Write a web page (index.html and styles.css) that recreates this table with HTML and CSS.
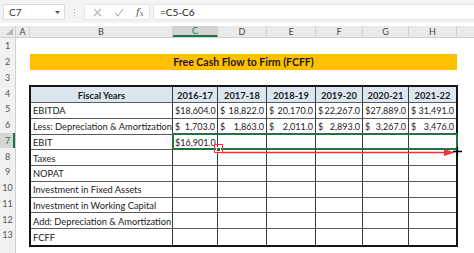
FILE: index.html
```html
<!DOCTYPE html>
<html>
<head>
<meta charset="utf-8">
<link rel="stylesheet" href="styles.css">
</head>
<body>
<div class="app">
  <div class="fbar">
    <div class="namebox"><span>C7</span><svg class="caret" width="5" height="3" viewBox="0 0 5 3"><path d="M0 0H5L2.5 3Z" fill="#555"/></svg></div>
    <div class="dots"><i></i><i></i><i></i></div>
    <div class="fbtns">
      <svg class="ico" width="9" height="9" viewBox="0 0 9 9"><path d="M1 1L8 8M8 1L1 8" stroke="#b5b5b5" stroke-width="1.1"/></svg>
      <svg class="ico" width="10" height="9" viewBox="0 0 10 9"><path d="M1 5L4 8L9 1" stroke="#b5b5b5" stroke-width="1.1" fill="none"/></svg>
      <span class="fx"><i>f</i><sub>x</sub></span>
    </div>
    <div class="formula">=C5-C6</div>
  </div>
  <div class="colhdr">
    <div class="corner"><svg width="7" height="7" viewBox="0 0 7 7"><path d="M7 0V7H0Z" fill="#b8b8b8"/></svg></div>
    <div class="ch w-a">A</div>
    <div class="ch w-b">B</div>
    <div class="ch w-c sel">C</div>
    <div class="ch w-d">D</div>
    <div class="ch w-e">E</div>
    <div class="ch w-f">F</div>
    <div class="ch w-g">G</div>
    <div class="ch w-h">H</div>
    <div class="ch w-i"></div>
  </div>
  <div class="grid">
    <div class="rowhdrs">
      <div class="rh">1</div><div class="rh">2</div><div class="rh">3</div><div class="rh">4</div>
      <div class="rh">5</div><div class="rh">6</div><div class="rh sel">7</div><div class="rh">8</div>
      <div class="rh">9</div><div class="rh">10</div><div class="rh">11</div><div class="rh">12</div>
      <div class="rh">13</div><div class="rh"></div>
    </div>
    <div class="body">
      <div class="row"></div>
      <div class="row"><div class="title">Free Cash Flow to Firm (FCFF)</div></div>
      <div class="row"></div>
      <div class="tbl">
        <div class="c hd">Fiscal Years</div><div class="c hd">2016-17</div><div class="c hd">2017-18</div><div class="c hd">2018-19</div><div class="c hd">2019-20</div><div class="c hd">2020-21</div><div class="c hd last">2021-22</div>

        <div class="c">EBITDA</div>
        <div class="c num"><span>$18,604.0</span></div>
        <div class="c num"><span>$</span><span>18,822.0</span></div>
        <div class="c num"><span>$</span><span>20,170.0</span></div>
        <div class="c num"><span>$</span><span>22,267.0</span></div>
        <div class="c num"><span>$27,889.0</span></div>
        <div class="c num last"><span>$</span><span>31,491.0</span></div>

        <div class="c">Less: Depreciation &amp; Amortization</div>
        <div class="c num"><span>$</span><span>1,703.0</span></div>
        <div class="c num"><span>$</span><span>1,863.0</span></div>
        <div class="c num"><span>$</span><span>2,011.0</span></div>
        <div class="c num"><span>$</span><span>2,893.0</span></div>
        <div class="c num"><span>$</span><span>3,267.0</span></div>
        <div class="c num last"><span>$</span><span>3,476.0</span></div>

        <div class="c">EBIT</div>
        <div class="c num"><span>$16,901.0</span></div>
        <div class="c"></div><div class="c"></div><div class="c"></div><div class="c"></div><div class="c last"></div>

        <div class="c">Taxes</div>
        <div class="c"></div><div class="c"></div><div class="c"></div><div class="c"></div><div class="c"></div><div class="c last"></div>

        <div class="c">NOPAT</div>
        <div class="c"></div><div class="c"></div><div class="c"></div><div class="c"></div><div class="c"></div><div class="c last"></div>

        <div class="c">Investment in Fixed Assets</div>
        <div class="c"></div><div class="c"></div><div class="c"></div><div class="c"></div><div class="c"></div><div class="c last"></div>

        <div class="c">Investment in Working Capital</div>
        <div class="c"></div><div class="c"></div><div class="c"></div><div class="c"></div><div class="c"></div><div class="c last"></div>

        <div class="c">Add: Depreciation &amp; Amortization</div>
        <div class="c"></div><div class="c"></div><div class="c"></div><div class="c"></div><div class="c"></div><div class="c last"></div>

        <div class="c bot">FCFF</div>
        <div class="c bot"></div><div class="c bot"></div><div class="c bot"></div><div class="c bot"></div><div class="c bot"></div><div class="c bot last"></div>
      </div>
    </div>

    <div class="selrange"></div>
    <div class="handle"></div>
    <div class="redbox"></div>
    <svg class="arrow" width="236" height="9" viewBox="0 0 236 9"><path d="M0 4.5H226" stroke="#e8383d" stroke-width="1.6"/><path d="M222 1L233 4.5L222 8Z" fill="#e8383d"/></svg>
    <svg class="cross" width="9" height="9" viewBox="0 0 9 9"><path d="M4.5 0V9M0 4.5H9" stroke="#000" stroke-width="1.3"/></svg>
  </div>
</div>
</body>
</html>
```

FILE: styles.css
```css
* { box-sizing: border-box; margin: 0; padding: 0; }
html, body { width: 474px; height: 253px; overflow: hidden; background: #fff; }
body { font-family: "Lato", "Open Sans", sans-serif; color: #1b1b1b; }
.app { width: 474px; }

.fbar {
  height: 23px; background: #f3f3f3; display: flex; align-items: flex-start;
  padding-top: 4px; font-size: 10px;
}
.namebox {
  margin-left: 3px; width: 62px; height: 16px; background: #fff; border: 1px solid #dedede;
  display: flex; align-items: center; justify-content: space-between; padding: 0 4px 0 5px; color: #333;
}
.dots { width: 19px; height: 16px; display: flex; flex-direction: column; align-items: center; justify-content: center; gap: 2px; }
.dots i { width: 1px; height: 1px; background: #b0b0b0; display: block; }
.fbtns {
  width: 66px; height: 16px; background: #fff; border: 1px solid #e4e4e4;
  display: flex; align-items: center; padding-left: 8px; gap: 12px;
}
.fx { font-family: "DejaVu Serif", serif; font-size: 10px; color: #555; line-height: 1; }
.fx sub { font-size: 7px; vertical-align: -1px; font-style: italic; }
.formula {
  margin-left: 3px; flex: 1; height: 16px; background: #fff; border: 1px solid #e4e4e4; border-right: 0;
  padding-left: 6px; display: flex; align-items: center; color: #222;
}

.colhdr { margin-top: 3px; height: 12px; display: flex; background: #eaeaea; border-bottom: 1px solid #cfcfcf; font-size: 9px; color: #444; }
.corner { width: 16px; display: flex; align-items: flex-end; justify-content: flex-end; padding: 0 2px 2px 0; border-right: 1px solid #cfcfcf; }
.ch { display: flex; align-items: center; justify-content: center; border-right: 1px solid #d0d0d0; }
.ch.sel { background: #d3d3d3; color: #217346; border-bottom: 2px solid #217346; }
.w-a { width: 14px; } .w-b { width: 143px; } .w-c { width: 45px; } .w-d { width: 49px; }
.w-e { width: 49px; } .w-f { width: 47px; } .w-g { width: 46px; } .w-h { width: 48px; } .w-i { flex: 1; border-right: 0; }

.grid { position: relative; display: flex; }
.rowhdrs { width: 16px; background: #f1f1f1; border-right: 1px solid #cfcfcf; font-size: 9px; color: #555; }
.rh { height: 15.75px; display: flex; align-items: center; justify-content: center; }
.rh.sel { background: #d6d6d6; color: #217346; box-shadow: inset -2px 0 0 #217346; }

.body { padding-left: 13px; font-size: 9.3px; }
.row { height: 15.75px; }
.title {
  margin-left: 1px; width: 427px; height: 16px; background: #ffc000;
  font-weight: 700; font-size: 10.5px; display: flex; align-items: center; justify-content: center; color: #1a1a1a;
}
.tbl {
  display: grid; grid-template-columns: 142px 45px 49px 49px 47px 46px 47px;
  grid-auto-rows: 15.75px; border: 2px solid #151515; width: 429px;
}
.c {
  border-right: 1px solid #3a3a3a; border-bottom: 1px solid #5a5a5a;
  display: flex; align-items: center; padding: 1px 2px 0 2px; white-space: nowrap; overflow: hidden;
}
.c.last { border-right: 0; }
.c.bot { border-bottom: 0; }
.c.hd { background: #dce6f1; font-weight: 700; justify-content: center; }
.c.num { justify-content: space-between; padding-right: 2px; font-size: 9px; }
.c.num span:only-child { margin-left: auto; }

.selrange { position: absolute; left: 172px; top: 95px; width: 286px; height: 17px; border: 2px solid #217346; }
.handle { position: absolute; left: 216px; top: 109px; width: 5px; height: 5px; background: #217346; border: 1px solid #fff; }
.redbox { position: absolute; left: 214px; top: 106px; width: 9px; height: 9px; border: 1.5px solid #e8383d; }
.arrow { position: absolute; left: 222px; top: 110px; }
.cross { position: absolute; left: 453px; top: 109px; }
```
